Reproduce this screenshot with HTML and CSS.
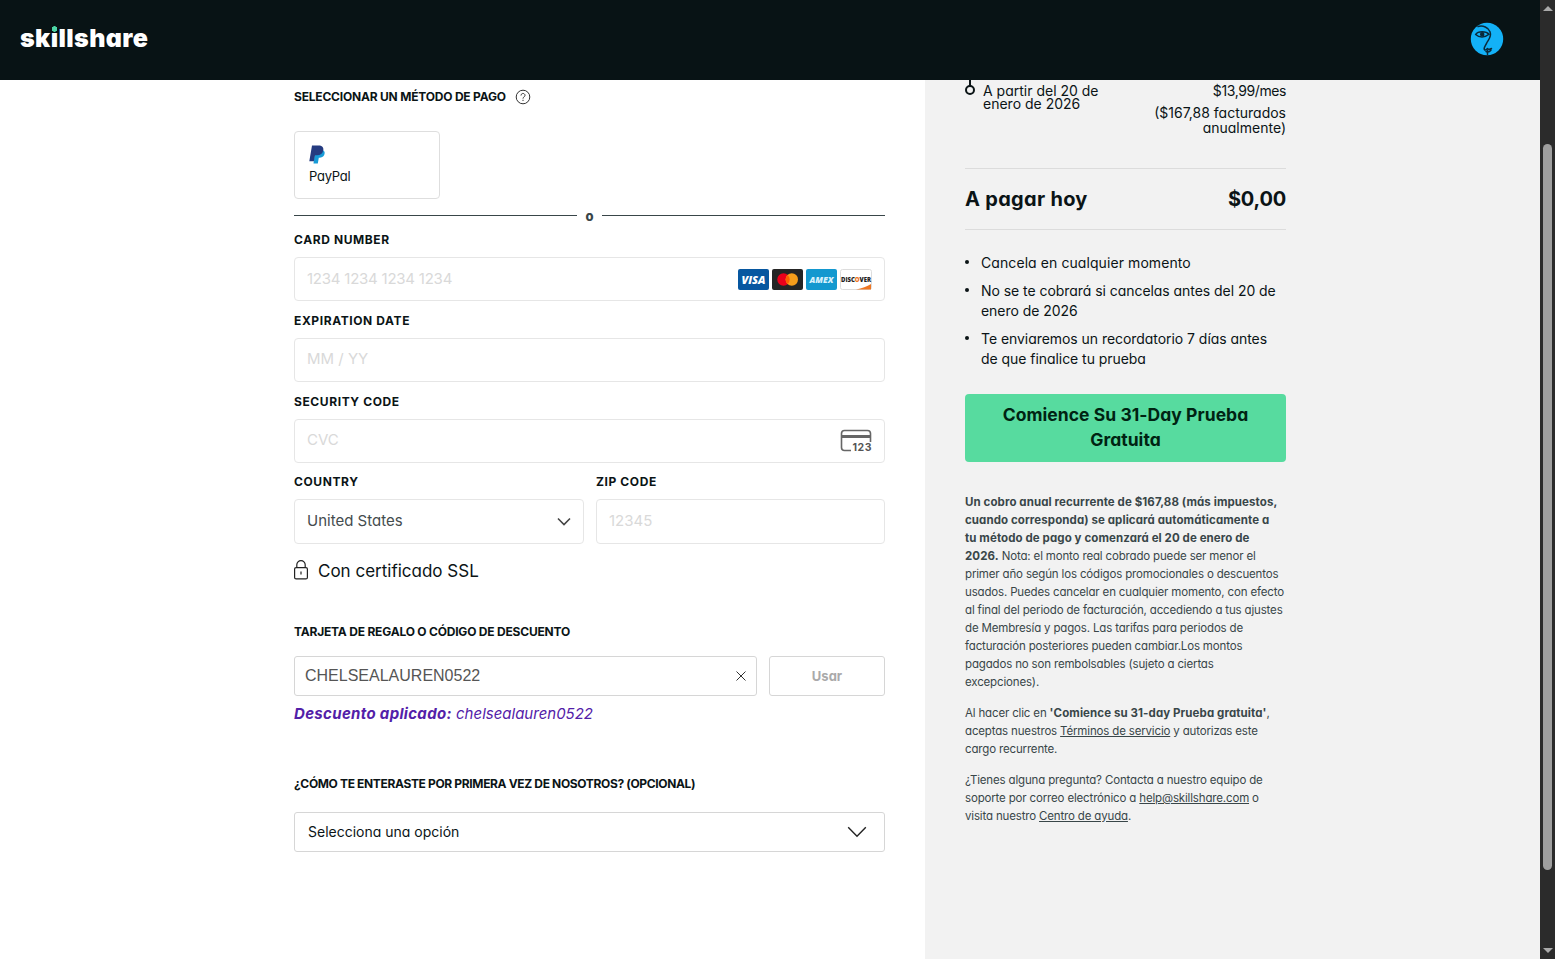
FILE: index.html
```html
<!DOCTYPE html>
<html lang="es">
<head>
  <meta charset="UTF-8">
  <title>Skillshare - Pago</title>
  <link rel="stylesheet" href="styles.css">
</head>
<body>

<div class="page">
  <header class="header">
    <div class="logo">sk<span class="logo-i">ı</span>llshare</div>
    <svg class="avatar" width="34" height="34" viewBox="0 0 34 34" fill="none" stroke="#0b2a3a" stroke-width="1.5" stroke-linecap="round">
      <circle cx="17" cy="17" r="16.2" fill="#13b1f7" stroke="none"/>
      <path d="M8 4.500C13 3 18.500 5.500 20 9.700C22 15 18 18 16.700 21C15.500 24 13 26.500 14.500 27.800C15.500 28.500 16.500 27.500 17 27"/>
      <path d="M5.700 12.500C8 9 16 9 19 12.300C15 15.800 9 15.800 5.700 12.500Z"/>
      <circle cx="12.200" cy="12.300" r="1.500" fill="#0b2a3a"/>
      <path d="M17.500 26.500L19 27.500L21.500 26.500M16 29.500C18 30.500 20 29.500 21 28M17.500 28V32.500"/>
    </svg>
  </header>

  <main class="content">
    <!-- Payment form -->
    <section class="form-column">
      <h2 class="title">
        <span>SELECCIONAR UN MÉTODO DE PAGO</span>
        <svg class="help" width="16" height="16" viewBox="0 0 16 16" fill="none" stroke="#333" stroke-width="1">
          <circle cx="8" cy="8" r="6.800"/>
          <path d="M6 6.500C6 3.800 10 3.800 10 6.400C10 7.900 8 7.800 8 9.600M8 10.800V12"/>
        </svg>
      </h2>

      <div class="paypal">
        <svg width="17" height="19" viewBox="0 0 17 19">
          <path fill="#179bd7" d="M6 5.500H14.500C16 6.500 15.900 8.500 15.200 10C14.300 12 12.500 12.700 10.500 12.700H9.800L8.800 18.500H4.500Z"/>
          <path fill="#253b80" d="M3 .500H9.500C13 .500 14.800 2.200 14.300 5.300C13.700 8.800 11.400 10.300 8 10.300H6L4.800 16.300H.300Z"/>
        </svg>
        <span>PayPal</span>
      </div>

      <div class="divider"><span>o</span></div>

      <div class="field">
        <label>CARD NUMBER</label>
        <div class="input">
          <span class="placeholder ph-card">1234 1234 1234 1234</span>
          <div class="cards">
            <svg width="31" height="21" viewBox="0 0 31 21">
              <rect width="31" height="21" rx="2" fill="#0757a0"/>
              <text class="visa" x="3.500" y="14.500" textLength="24">VISA</text>
            </svg>
            <svg width="31" height="21" viewBox="0 0 31 21">
              <rect width="31" height="21" rx="2" fill="#252525"/>
              <circle cx="11.500" cy="10.500" r="6.200" fill="#eb001b"/>
              <circle cx="19.800" cy="10.500" r="6.200" fill="#f79e1b"/>
              <path d="M15.650 5.900A6.200 6.200 0 0 1 15.650 15.100A6.200 6.200 0 0 1 15.650 5.900Z" fill="#ff5f00"/>
            </svg>
            <svg width="31" height="21" viewBox="0 0 31 21">
              <rect width="31" height="21" rx="2" fill="#1398cf"/>
              <text class="amex" x="3.500" y="13.800" textLength="24" lengthAdjust="spacingAndGlyphs">AMEX</text>
            </svg>
            <svg width="32" height="21" viewBox="0 0 32 21">
              <rect x=".5" y=".5" width="31" height="20" rx="2" fill="#fff" stroke="#ddd"/>
              <path d="M16 20.500C22 19.500 27 17.500 31 15V20.500Z" fill="#ee7623"/>
              <text class="discover" x="1" y="12.500" textLength="30">DISC<tspan fill="#ee7623">O</tspan>VER</text>
            </svg>
          </div>
        </div>
      </div>

      <div class="field">
        <label>EXPIRATION DATE</label>
        <div class="input"><span class="placeholder">MM / YY</span></div>
      </div>

      <div class="field">
        <label>SECURITY CODE</label>
        <div class="input">
          <span class="placeholder">CVC</span>
          <svg class="cvc" width="32" height="24" viewBox="0 0 32 24" fill="none" stroke="#666" stroke-width="1.600">
            <path d="M11 21.500H4.500Q1.500 21.500 1.500 18.500V4.500Q1.500 1.500 4.500 1.500H27.500Q30.500 1.500 30.500 4.500V13"/>
            <path d="M1.500 7.500H30.500" stroke-width="3"/>
            <text class="cvc-text" x="12.500" y="22.300" textLength="19">123</text>
          </svg>
        </div>
      </div>

      <div class="row">
        <div class="field country">
          <label>COUNTRY</label>
          <div class="input">
            <span class="value">United States</span>
            <svg width="14" height="9" viewBox="0 0 14 9" fill="none" stroke="#444" stroke-width="1.600">
              <path d="M1 1.500L7 7.500L13 1.500"/>
            </svg>
          </div>
        </div>
        <div class="field zip">
          <label>ZIP CODE</label>
          <div class="input"><span class="placeholder">12345</span></div>
        </div>
      </div>

      <div class="ssl">
        <svg width="14" height="20" viewBox="0 0 14 20" fill="none" stroke="#222" stroke-width="1.200">
          <rect x=".6" y="7.600" width="12.800" height="11.300" rx="1.500"/>
          <path d="M2.800 7.600V4.800A4.200 4.200 0 0 1 11.200 4.800V7.600M7 11.500V14.500"/>
        </svg>
        <span>Con certificado SSL</span>
      </div>

      <h2 class="title title-gift"><span>TARJETA DE REGALO O CÓDIGO DE DESCUENTO</span></h2>
      <div class="coupon">
        <div class="coupon-input">
          <span>CHELSEALAUREN0522</span>
          <svg width="10" height="10" viewBox="0 0 10 10" stroke="#333" stroke-width="1">
            <path d="M.5 .5L9.500 9.500M9.500 .5L.5 9.500"/>
          </svg>
        </div>
        <button class="coupon-button">Usar</button>
      </div>
      <p class="discount"><b>Descuento aplicado:</b> <span>chelsealauren0522</span></p>

      <h2 class="title title-source"><span>¿CÓMO TE ENTERASTE POR PRIMERA VEZ DE NOSOTROS? (OPCIONAL)</span></h2>
      <div class="select">
        <span>Selecciona una opción</span>
        <svg width="20" height="12" viewBox="0 0 20 12" fill="none" stroke="#222" stroke-width="1.400">
          <path d="M1.200 1.200L10 10.200L18.800 1.200"/>
        </svg>
      </div>
    </section>

    <!-- Order summary -->
    <aside class="summary">
      <div class="plan">
        <svg class="step" width="10" height="17" viewBox="0 0 10 17" fill="none" stroke="#0b1416" stroke-width="2">
          <path d="M5 0V6"/>
          <circle cx="5" cy="10" r="4"/>
        </svg>
        <p class="plan-date">A partir del 20 de<br>enero de 2026</p>
        <div class="plan-price">
          <p class="plan-month">$13,99/mes</p>
          <p class="plan-year">($167,88 facturados<br>anualmente)</p>
        </div>
      </div>

      <div class="total"><span>A pagar hoy</span><span class="amount">$0,00</span></div>

      <ul class="notes">
        <li>Cancela en cualquier momento</li>
        <li>No se te cobrará si cancelas antes del 20 de<br>enero de 2026</li>
        <li>Te enviaremos un recordatorio 7 días antes<br>de que finalice tu prueba</li>
      </ul>

      <button class="submit">Comience Su 31-Day Prueba<br>Gratuita</button>

      <div class="legal">
        <p><b>Un cobro anual recurrente de $167,88 (más impuestos,<br>cuando corresponda) se aplicará automáticamente a<br>tu método de pago y comenzará el 20 de enero de<br>2026.</b> Nota: el monto real cobrado puede ser menor el<br>primer año según los códigos promocionales o descuentos<br>usados. Puedes cancelar en cualquier momento, con efecto<br>al final del periodo de facturación, accediendo a tus ajustes<br>de Membresía y pagos. Las tarifas para periodos de<br>facturación posteriores pueden cambiar.Los montos<br>pagados no son rembolsables (sujeto a ciertas<br>excepciones).</p>
        <p>Al hacer clic en <b>'Comience su 31-day Prueba gratuita'</b>,<br>aceptas nuestros <a>Términos de servicio</a> y autorizas este<br>cargo recurrente.</p>
        <p>¿Tienes alguna pregunta? Contacta a nuestro equipo de<br>soporte por correo electrónico a <a>help@skillshare.com</a> o<br>visita nuestro <a>Centro de ayuda</a>.</p>
      </div>
    </aside>
  </main>
</div>

<div class="scrollbar">
  <i class="arrow arrow-up"></i>
  <div class="thumb"></div>
  <i class="arrow arrow-down"></i>
</div>

</body>
</html>
```
FILE: styles.css
```css
* {
  box-sizing: border-box;
}

body {
  margin: 0;
  display: flex;
  height: 959px;
  overflow: hidden;
  font-family: Inter, "Liberation Sans", sans-serif;
  font-feature-settings: "cv11";
  color: #0b1416;
  background: #fff;
}

h2, p, ul {
  margin: 0;
  padding: 0;
}

.page {
  width: 1540px;
}

.header {
  height: 80px;
  padding: 0 36px 2px 20px;
  display: flex;
  align-items: center;
  justify-content: space-between;
  background: #081315;
}

.logo {
  margin-bottom: 2px;
  color: #fff;
  font-size: 25px;
  font-weight: 900;
  letter-spacing: 0.4px;
}

.logo-i {
  background: radial-gradient(circle at 50% 6px, #4cd5a5 2.5px, transparent 3px);
}

.content {
  display: flex;
  height: 879px;
}

.form-column {
  flex: none;
  width: 925px;
  padding: 8px 40px 0 294px;
}

.title {
  display: flex;
  align-items: center;
  height: 16px;
  font-size: 12px;
  font-weight: 700;
  letter-spacing: -0.2px;
  white-space: nowrap;
}

.help {
  margin: 2px 0 0 9px;
}

.paypal {
  width: 146px;
  height: 68px;
  margin-top: 27px;
  padding: 13px 14px 0;
  border: 1px solid #dedede;
  border-radius: 4px;
  font-size: 13px;
  line-height: 18px;
  letter-spacing: -0.25px;
}

.paypal svg,
.paypal span {
  display: block;
}

.paypal span {
  margin-top: 3px;
}

.divider {
  display: flex;
  align-items: center;
  gap: 8px;
  height: 33px;
  color: #394649;
  font-size: 13px;
  font-weight: 800;
}

.divider::before,
.divider::after {
  content: "";
  flex: 1;
  height: 1px;
  background: #394649;
}

.field {
  margin-bottom: 11.5px;
}

.field label {
  display: block;
  height: 16px;
  margin-bottom: 9px;
  font-size: 12px;
  font-weight: 700;
  line-height: 16px;
  letter-spacing: 0.6px;
}

.input {
  display: flex;
  align-items: center;
  justify-content: space-between;
  height: 44.3px;
  padding: 0 12px;
  border: 1px solid #e6e6e6;
  border-radius: 4px;
  font-size: 15px;
}

.placeholder,
.value {
  margin-bottom: 2px;
}

.placeholder {
  color: #d9d9d9;
}

.ph-card {
  letter-spacing: -0.23px;
}

.value {
  color: #444c4e;
}

.cards {
  display: flex;
  gap: 3px;
}

.visa {
  fill: #fff;
  font: italic 800 11px "Open Sans", sans-serif;
}

.amex {
  fill: #d8f1fb;
  font: italic 800 8px "Open Sans", sans-serif;
}

.discover {
  fill: #222;
  font: 800 6px "Open Sans", sans-serif;
}

.cvc {
  margin-top: 1px;
}

.cvc-text {
  fill: #555;
  stroke: none;
  font-size: 10.5px;
  font-weight: 700;
}

.row {
  display: flex;
  gap: 12px;
}

.country {
  width: 290px;
}

.zip {
  flex: 1;
}

.ssl {
  display: flex;
  align-items: center;
  gap: 10px;
  height: 24px;
  margin-top: 3.6px;
  font-size: 17px;
}

.ssl svg {
  margin-bottom: 2px;
}

.title-gift {
  margin-top: 41px;
}

.coupon {
  display: flex;
  gap: 12px;
  margin-top: 16px;
}

.coupon-input {
  display: flex;
  align-items: center;
  justify-content: space-between;
  width: 463px;
  height: 40px;
  padding: 0 10px;
  border: 1px solid #d6d6d6;
  border-radius: 3px;
  color: #555;
  font-family: "Liberation Sans", sans-serif;
  font-size: 16px;
}

.coupon-button {
  flex: 1;
  border: 1px solid #d6d6d6;
  border-radius: 3px;
  background: #fff;
  color: #aaa;
  font: inherit;
  font-size: 13px;
  font-weight: 700;
}

.discount {
  height: 20px;
  margin-top: 8px;
  color: #5220a8;
  font-size: 15px;
  font-style: italic;
  line-height: 20px;
}

.discount b {
  letter-spacing: 0.33px;
}

.title-source {
  margin-top: 52px;
  letter-spacing: -0.35px;
}

.select {
  display: flex;
  align-items: center;
  justify-content: space-between;
  height: 40px;
  margin-top: 20px;
  padding: 0 17px 0 13px;
  border: 1px solid #d6d6d6;
  border-radius: 3px;
  font-size: 14px;
}

.summary {
  flex: 1;
  padding: 0 254px 0 40px;
  background: #f2f2f2;
}

.plan {
  display: flex;
  height: 88px;
  font-size: 14px;
}

.plan-date {
  flex: 1;
  margin: 4px 0 0 8px;
  line-height: 13px;
}

.plan-price {
  padding-top: 3px;
  line-height: 15px;
  text-align: right;
}

.plan-month {
  letter-spacing: -0.4px;
}

.plan-year {
  margin-top: 7px;
}

.total {
  display: flex;
  align-items: center;
  justify-content: space-between;
  height: 62px;
  border-top: 1px solid #dcdcdc;
  border-bottom: 1px solid #dcdcdc;
  font-size: 20px;
  font-weight: 700;
  letter-spacing: 0.3px;
}

.amount {
  letter-spacing: -0.2px;
}

.notes {
  margin-top: 23px;
  list-style: none;
  font-size: 14px;
  line-height: 20px;
}

.notes li {
  position: relative;
  margin-bottom: 8px;
  padding-left: 16px;
  letter-spacing: -0.05px;
  white-space: nowrap;
}

.notes li:first-child {
  letter-spacing: 0.08px;
}

.notes li::before {
  content: "";
  position: absolute;
  left: 0;
  top: 7px;
  width: 4px;
  height: 4px;
  border-radius: 50%;
  background: #0b1416;
}

.submit {
  display: block;
  width: 321px;
  height: 68px;
  margin-top: 25px;
  padding: 0 0 2px;
  border: 0;
  border-radius: 4px;
  background: #57db9f;
  color: #002312;
  font: inherit;
  font-size: 17.5px;
  font-weight: 700;
  line-height: 25px;
  letter-spacing: 0.05px;
}

.legal {
  margin-top: 31px;
  color: #394649;
  font-size: 11.5px;
  line-height: 18px;
  letter-spacing: -0.16px;
  white-space: nowrap;
}

.legal b {
  letter-spacing: 0.09px;
}

.legal p {
  margin-bottom: 13px;
}

.legal a {
  text-decoration: underline;
}

.scrollbar {
  display: flex;
  flex-direction: column;
  align-items: center;
  justify-content: space-between;
  width: 15px;
  padding: 6px 0;
  background: #2b2b2b;
}

.thumb {
  width: 9px;
  height: 726px;
  margin-bottom: -54px;
  border-radius: 5px;
  background: #9f9f9f;
}

.arrow {
  border: 5px solid transparent;
}

.arrow-up {
  border-top: 0;
  border-bottom-color: #aaa;
}

.arrow-down {
  border-bottom: 0;
  border-top-color: #aaa;
}
```
